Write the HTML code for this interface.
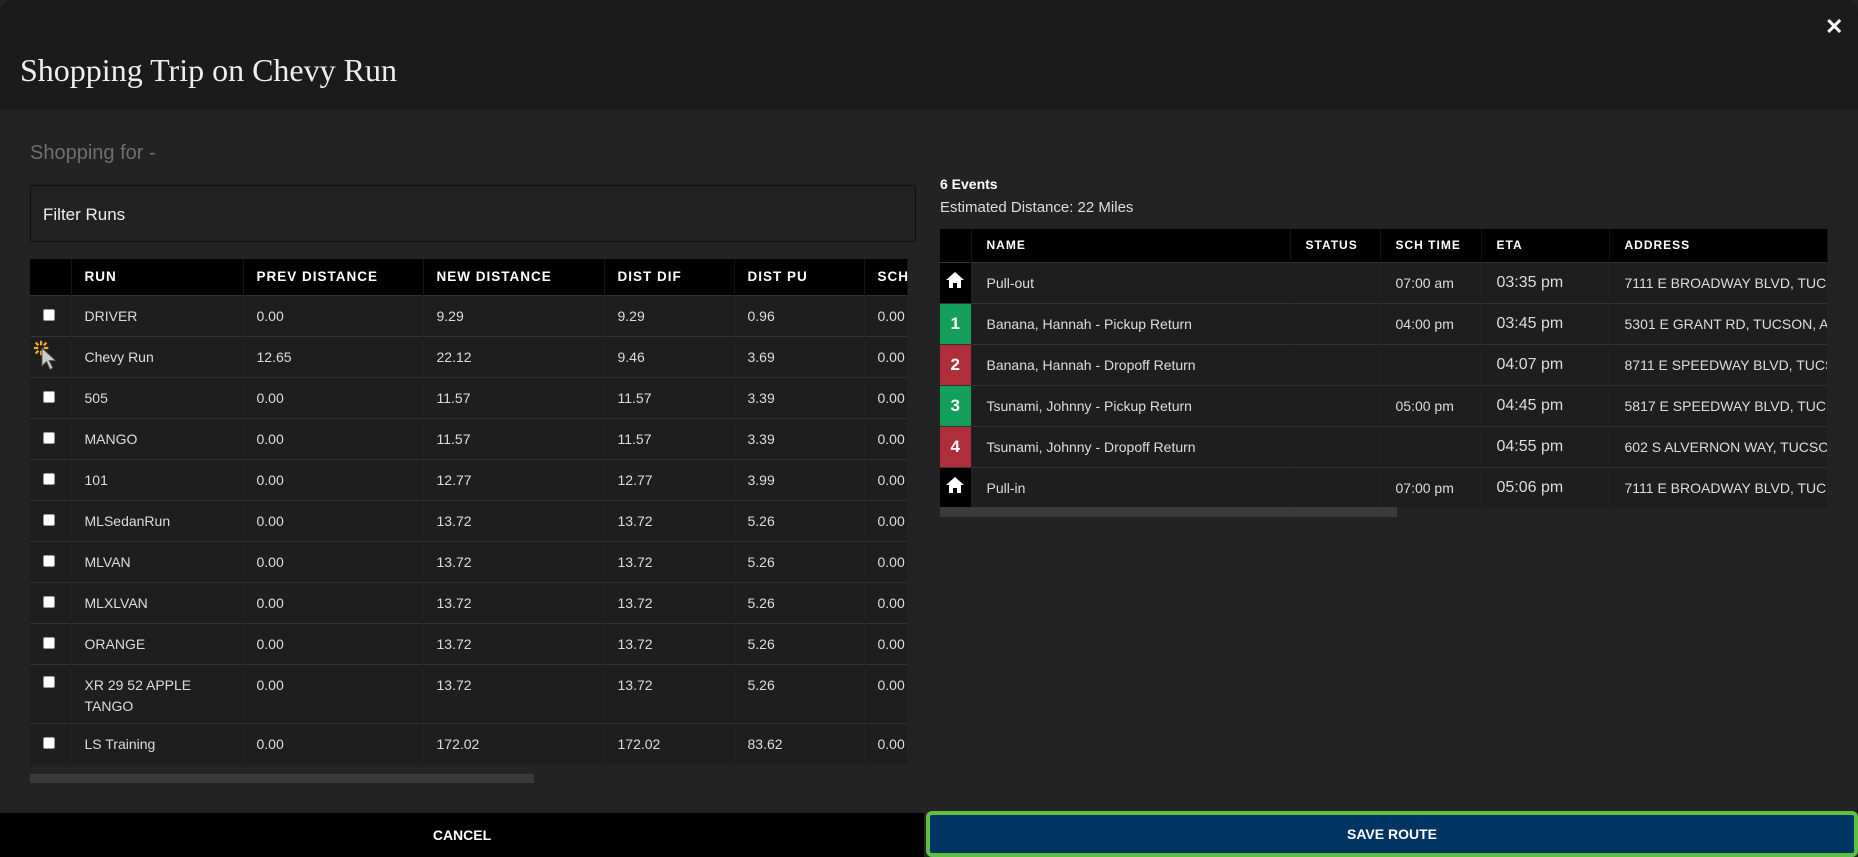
<!DOCTYPE html>
<html><head><meta charset="utf-8"><style>
*{box-sizing:border-box;margin:0;padding:0}
body{width:1858px;height:857px;background:#232323;font-family:"Liberation Sans",sans-serif;color:#ddd;position:relative;overflow:hidden}
.hdr{position:absolute;left:0;top:0;width:1858px;height:110px;background:#1b1b1b;border-radius:12px 12px 0 0}
.title{position:absolute;left:20px;top:52px;font-family:"Liberation Serif",serif;font-size:32px;color:#eee}
.close{position:absolute;left:1825px;top:14px;font-size:22px;color:#fff;font-weight:bold}
.shop{position:absolute;left:30px;top:142px;font-size:20px;color:#6f6f6f}
.filter{position:absolute;left:30px;top:185px;width:886px;height:57px;border:1px solid #0e0e0e;border-radius:3px;background:#222;font-size:17px;color:#eee;padding:19px 12px}
table{border-collapse:collapse;position:absolute;table-layout:fixed}
th{background:#000;color:#fff;font-size:13.5px;font-weight:bold;letter-spacing:1px;text-align:left;border-right:1px solid #141414}
td{background:#1e1e1e;font-size:14px;color:#ddd;border-top:1px solid #333;border-right:1px solid #232323;vertical-align:middle;overflow:hidden}
#lt{left:30px;top:259px;width:877px}
#lt th{height:36px;padding-left:13px}
#lt td{height:41px;padding-left:13px}
.box{display:inline-block;width:12px;height:12px;background:#fff;border-radius:2px;border:1px solid #999}
#rt{left:940px;top:229px;width:887px}
#rt th{height:33px;padding-left:15px;font-size:12px}
#rt td{height:41px;padding-left:15px}
#rt td.ic{padding:0;text-align:center;color:#fff;font-weight:bold;font-size:17px;background:#000}
.g{background:#14a05a!important}.r{background:#b02d3a!important}
.eta{font-size:16px}
.sb{position:absolute;background:#3a3a3a}
.cancel{position:absolute;left:0;top:813px;width:924px;height:44px;background:#000;color:#fff;font-weight:bold;font-size:14px;text-align:center;line-height:44px}
.save{position:absolute;left:926px;top:811px;width:932px;height:46px;background:#003462;border:4px solid #5fbf45;border-radius:6px;color:#fff;font-weight:bold;font-size:14px;text-align:center;line-height:38px}
</style></head><body>
<div class="hdr"></div>
<div class="title">Shopping Trip on Chevy Run</div>
<div class="close">✕</div>
<div class="shop">Shopping for -</div>
<div class="filter">Filter Runs</div>
<table id="lt">
<colgroup><col style="width:41px"><col style="width:172px"><col style="width:180px"><col style="width:181px"><col style="width:130px"><col style="width:130px"><col style="width:43px"></colgroup>
<tr><th></th><th>RUN</th><th>PREV DISTANCE</th><th>NEW DISTANCE</th><th>DIST DIF</th><th>DIST PU</th><th>SCH</th></tr>
<tr><td><span class="box"></span></td><td>DRIVER</td><td>0.00</td><td>9.29</td><td>9.29</td><td>0.96</td><td>0.00</td></tr>
<tr><td style="padding-left:3px"><svg width="36" height="36" viewBox="0 0 40 40" style="display:block"><g stroke="#f5a623" stroke-width="2.5"><line x1="9" y1="2" x2="9" y2="7"/><line x1="9" y1="13" x2="9" y2="18"/><line x1="1" y1="10" x2="6" y2="10"/><line x1="12" y1="10" x2="17" y2="10"/><line x1="3" y1="4" x2="6" y2="7"/><line x1="15" y1="4" x2="12" y2="7"/><line x1="3" y1="16" x2="6" y2="13"/></g><path d="M10 10 L10 30 L15 25 L19 34 L22 32 L18 24 L25 24 Z" fill="#ccc" stroke="#555"/></svg></td><td>Chevy Run</td><td>12.65</td><td>22.12</td><td>9.46</td><td>3.69</td><td>0.00</td></tr>
<tr><td><span class="box"></span></td><td>505</td><td>0.00</td><td>11.57</td><td>11.57</td><td>3.39</td><td>0.00</td></tr>
<tr><td><span class="box"></span></td><td>MANGO</td><td>0.00</td><td>11.57</td><td>11.57</td><td>3.39</td><td>0.00</td></tr>
<tr><td><span class="box"></span></td><td>101</td><td>0.00</td><td>12.77</td><td>12.77</td><td>3.99</td><td>0.00</td></tr>
<tr><td><span class="box"></span></td><td>MLSedanRun</td><td>0.00</td><td>13.72</td><td>13.72</td><td>5.26</td><td>0.00</td></tr>
<tr><td><span class="box"></span></td><td>MLVAN</td><td>0.00</td><td>13.72</td><td>13.72</td><td>5.26</td><td>0.00</td></tr>
<tr><td><span class="box"></span></td><td>MLXLVAN</td><td>0.00</td><td>13.72</td><td>13.72</td><td>5.26</td><td>0.00</td></tr>
<tr><td><span class="box"></span></td><td>ORANGE</td><td>0.00</td><td>13.72</td><td>13.72</td><td>5.26</td><td>0.00</td></tr>
<tr><td style="height:59px;vertical-align:top;padding-top:10px"><span class="box"></span></td><td style="height:59px;vertical-align:top;padding-top:10px;line-height:21px">XR 29 52 APPLE TANGO</td><td style="vertical-align:top;padding-top:12px">0.00</td><td style="vertical-align:top;padding-top:12px">13.72</td><td style="vertical-align:top;padding-top:12px">13.72</td><td style="vertical-align:top;padding-top:12px">5.26</td><td style="vertical-align:top;padding-top:12px">0.00</td></tr>
<tr><td><span class="box"></span></td><td>LS Training</td><td>0.00</td><td>172.02</td><td>172.02</td><td>83.62</td><td>0.00</td></tr>
</table>
<div class="sb" style="left:30px;top:774px;width:504px;height:9px"></div>
<div style="position:absolute;left:940px;top:176px;font-size:14px;font-weight:bold;color:#fff">6 Events</div>
<div style="position:absolute;left:940px;top:199px;font-size:15px;color:#ddd">Estimated Distance: 22 Miles</div>
<table id="rt">
<colgroup><col style="width:31px"><col style="width:319px"><col style="width:90px"><col style="width:101px"><col style="width:128px"><col style="width:218px"></colgroup>
<tr><th style="padding:0"></th><th>NAME</th><th>STATUS</th><th>SCH TIME</th><th>ETA</th><th>ADDRESS</th></tr>
<tr><td class="ic"><svg width="18" height="16" viewBox="0 0 18 16"><path d="M9 0 L18 8 L15 8 L15 16 L11 16 L11 11 L7 11 L7 16 L3 16 L3 8 L0 8 Z" fill="#fff"/></svg></td><td>Pull-out</td><td></td><td>07:00 am</td><td class="eta">03:35 pm</td><td style="white-space:nowrap">7111 E BROADWAY BLVD, TUCSON</td></tr>
<tr><td class="ic g">1</td><td>Banana, Hannah - Pickup Return</td><td></td><td>04:00 pm</td><td class="eta">03:45 pm</td><td style="white-space:nowrap">5301 E GRANT RD, TUCSON, AZ,</td></tr>
<tr><td class="ic r">2</td><td>Banana, Hannah - Dropoff Return</td><td></td><td></td><td class="eta">04:07 pm</td><td style="white-space:nowrap">8711 E SPEEDWAY BLVD, TUCSON</td></tr>
<tr><td class="ic g">3</td><td>Tsunami, Johnny - Pickup Return</td><td></td><td>05:00 pm</td><td class="eta">04:45 pm</td><td style="white-space:nowrap">5817 E SPEEDWAY BLVD, TUCSON</td></tr>
<tr><td class="ic r">4</td><td>Tsunami, Johnny - Dropoff Return</td><td></td><td></td><td class="eta">04:55 pm</td><td style="white-space:nowrap">602 S ALVERNON WAY, TUCSON,</td></tr>
<tr><td class="ic"><svg width="18" height="16" viewBox="0 0 18 16"><path d="M9 0 L18 8 L15 8 L15 16 L11 16 L11 11 L7 11 L7 16 L3 16 L3 8 L0 8 Z" fill="#fff"/></svg></td><td>Pull-in</td><td></td><td>07:00 pm</td><td class="eta">05:06 pm</td><td style="white-space:nowrap">7111 E BROADWAY BLVD, TUCSON</td></tr>
</table>
<div class="sb" style="left:940px;top:507px;width:457px;height:10px"></div>
<div class="cancel">CANCEL</div>
<div class="save">SAVE ROUTE</div>
</body></html>
